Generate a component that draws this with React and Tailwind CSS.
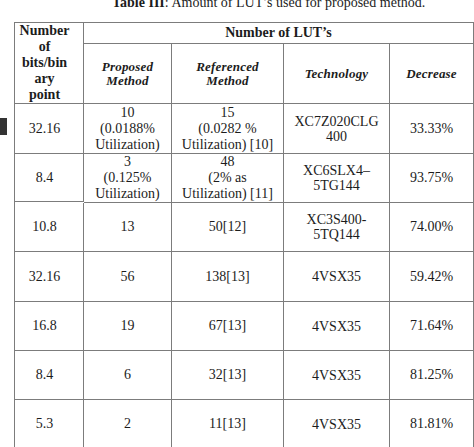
import React from "react";

const rows = [
  { bits: "32.16", prop: ["10", "(0.0188%", "Utilization)"], ref: ["15", "(0.0282 %", "Utilization) [10]"], tech: ["XC7Z020CLG", "400"], dec: "33.33%", h: "h-[50px]" },
  { bits: "8.4", prop: ["3", "(0.125%", "Utilization)"], ref: ["48", "(2% as", "Utilization) [11]"], tech: ["XC6SLX4–", "5TG144"], dec: "93.75%", h: "h-[48px]" },
  { bits: "10.8", prop: ["13"], ref: ["50[12]"], tech: ["XC3S400-", "5TQ144"], dec: "74.00%", h: "h-[49px]" },
  { bits: "32.16", prop: ["56"], ref: ["138[13]"], tech: ["4VSX35"], dec: "59.42%", h: "h-[50px]" },
  { bits: "16.8", prop: ["19"], ref: ["67[13]"], tech: ["4VSX35"], dec: "71.64%", h: "h-[49px]" },
  { bits: "8.4", prop: ["6"], ref: ["32[13]"], tech: ["4VSX35"], dec: "81.25%", h: "h-[49px]" },
  { bits: "5.3", prop: ["2"], ref: ["11[13]"], tech: ["4VSX35"], dec: "81.81%", h: "h-[49px]" },
];

const cell = "flex flex-col items-center justify-center text-center border-r border-b border-[#7c7c7c]";

function Lines({ items }) {
  return items.map((t, i) => <span key={i}>{t}</span>);
}

export default function App() {
  return (
    <div
      className="relative w-[474px] h-[447px] overflow-hidden bg-white text-[#1c1c1c]"
      style={{ fontFamily: '"Liberation Serif", "Times New Roman", serif' }}
    >
      {/* scan artefact at the left edge */}
      <div className="absolute left-0 top-[118px] w-[7px] h-[17px] bg-[#333]" />

      <div className="mt-[-5px] pl-[112px] text-[14px] leading-[16px] whitespace-nowrap">
        <span className="font-bold">Table III</span>: Amount of LUT’s used for proposed method.
      </div>

      <div className="mt-[11px] ml-[14px] w-[460px] border-l border-t border-[#7c7c7c] grid grid-cols-[69px_88px_112px_106px_84px] text-[14px] leading-[16px]">
        <div className={`${cell} row-span-2 pr-[9px] font-bold`}>
          <span>Number</span>
          <span>of</span>
          <span>bits/bin</span>
          <span>ary</span>
          <span>point</span>
        </div>
        <div className={`${cell} col-span-4 h-[21px] font-bold`}>Number of LUT’s</div>
        <div className={`${cell} h-[60px] font-bold italic text-[13px] leading-[14px] tracking-[0.2px]`}>
          <span>Proposed</span>
          <span>Method</span>
        </div>
        <div className={`${cell} font-bold italic text-[13px] leading-[14px] tracking-[0.2px]`}>
          <span>Referenced</span>
          <span>Method</span>
        </div>
        <div className={`${cell} font-bold italic text-[13px] leading-[14px] tracking-[0.2px]`}>Technology</div>
        <div className={`${cell} font-bold italic text-[13px] leading-[14px] tracking-[0.2px]`}>Decrease</div>

        {rows.map((r, i) => (
          <React.Fragment key={i}>
            <div className={`${cell} ${r.h} pr-[9px]`}>{r.bits}</div>
            <div className={cell}>
              <Lines items={r.prop} />
            </div>
            <div className={cell}>
              <Lines items={r.ref} />
            </div>
            <div className={`${cell} leading-[15px]`}>
              <Lines items={r.tech} />
            </div>
            <div className={cell}>{r.dec}</div>
          </React.Fragment>
        ))}
      </div>
    </div>
  );
}
